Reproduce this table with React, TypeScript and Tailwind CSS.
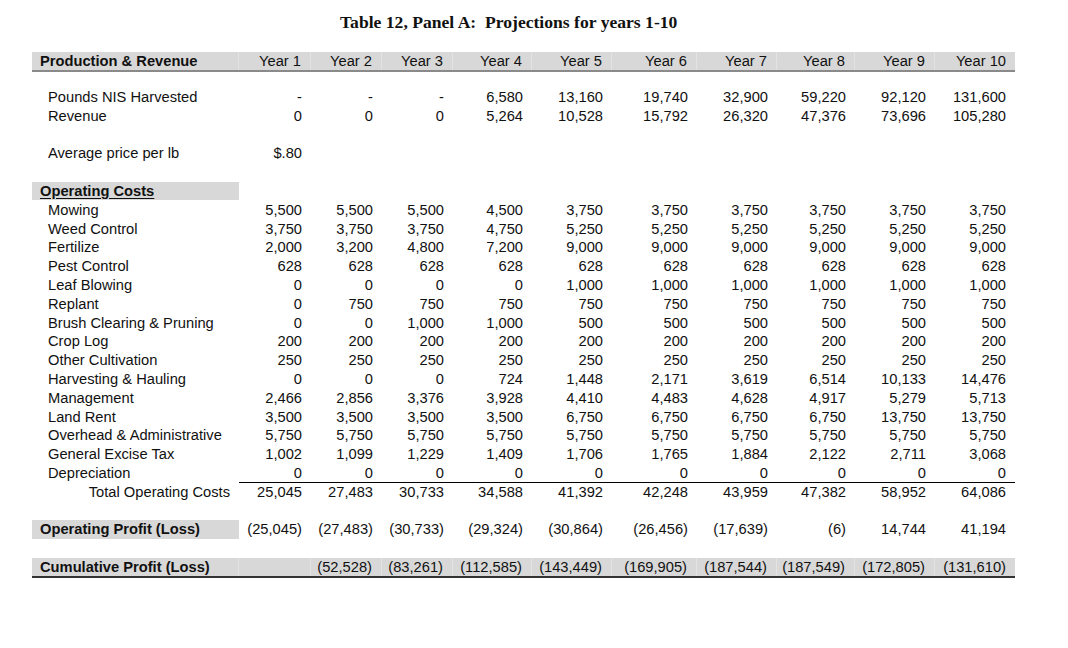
import React from 'react';

const COLS = 'grid grid-cols-[207px_72px_71px_71px_79px_80px_85px_80px_78px_80px_80px]';
const YEARS = ['Year 1', 'Year 2', 'Year 3', 'Year 4', 'Year 5', 'Year 6', 'Year 7', 'Year 8', 'Year 9', 'Year 10'];

type Row = { label: string; values: string[] };

const production: Row[] = [
  { label: 'Pounds NIS Harvested', values: ['-', '-', '-', '6,580', '13,160', '19,740', '32,900', '59,220', '92,120', '131,600'] },
  { label: 'Revenue', values: ['0', '0', '0', '5,264', '10,528', '15,792', '26,320', '47,376', '73,696', '105,280'] },
];

const costs: Row[] = [
  { label: 'Mowing', values: ['5,500', '5,500', '5,500', '4,500', '3,750', '3,750', '3,750', '3,750', '3,750', '3,750'] },
  { label: 'Weed Control', values: ['3,750', '3,750', '3,750', '4,750', '5,250', '5,250', '5,250', '5,250', '5,250', '5,250'] },
  { label: 'Fertilize', values: ['2,000', '3,200', '4,800', '7,200', '9,000', '9,000', '9,000', '9,000', '9,000', '9,000'] },
  { label: 'Pest Control', values: ['628', '628', '628', '628', '628', '628', '628', '628', '628', '628'] },
  { label: 'Leaf Blowing', values: ['0', '0', '0', '0', '1,000', '1,000', '1,000', '1,000', '1,000', '1,000'] },
  { label: 'Replant', values: ['0', '750', '750', '750', '750', '750', '750', '750', '750', '750'] },
  { label: 'Brush Clearing & Pruning', values: ['0', '0', '1,000', '1,000', '500', '500', '500', '500', '500', '500'] },
  { label: 'Crop Log', values: ['200', '200', '200', '200', '200', '200', '200', '200', '200', '200'] },
  { label: 'Other Cultivation', values: ['250', '250', '250', '250', '250', '250', '250', '250', '250', '250'] },
  { label: 'Harvesting & Hauling', values: ['0', '0', '0', '724', '1,448', '2,171', '3,619', '6,514', '10,133', '14,476'] },
  { label: 'Management', values: ['2,466', '2,856', '3,376', '3,928', '4,410', '4,483', '4,628', '4,917', '5,279', '5,713'] },
  { label: 'Land Rent', values: ['3,500', '3,500', '3,500', '3,500', '6,750', '6,750', '6,750', '6,750', '13,750', '13,750'] },
  { label: 'Overhead & Administrative', values: ['5,750', '5,750', '5,750', '5,750', '5,750', '5,750', '5,750', '5,750', '5,750', '5,750'] },
  { label: 'General Excise Tax', values: ['1,002', '1,099', '1,229', '1,409', '1,706', '1,765', '1,884', '2,122', '2,711', '3,068'] },
  { label: 'Depreciation', values: ['0', '0', '0', '0', '0', '0', '0', '0', '0', '0'] },
];

const totals = ['25,045', '27,483', '30,733', '34,588', '41,392', '42,248', '43,959', '47,382', '58,952', '64,086'];
const profit = ['(25,045)', '(27,483)', '(30,733)', '(29,324)', '(30,864)', '(26,456)', '(17,639)', '(6)', '14,744', '41,194'];
const cumulative = ['', '(52,528)', '(83,261)', '(112,585)', '(143,449)', '(169,905)', '(187,544)', '(187,549)', '(172,805)', '(131,610)'];

function DataRow({ row }: { row: Row }) {
  return (
    <div className={`${COLS} h-[18.8px] items-center`}>
      <div className="pl-4 whitespace-nowrap">{row.label}</div>
      {row.values.map((v, i) => (
        <div key={i} className="pr-[9px] text-right whitespace-nowrap">{v}</div>
      ))}
    </div>
  );
}

function Spacer() {
  return <div className="h-[18.8px]" />;
}

export default function App() {
  return (
    <div className="min-h-screen bg-white text-[#111] font-['Liberation_Sans',Arial,sans-serif] text-[14.7px] leading-[18px]">
      {/* Title */}
      <div className="pt-[12px] pl-[340px] h-[51px] font-['Liberation_Serif','Times_New_Roman',serif] font-bold text-[17.6px] leading-[20px] whitespace-pre">
        Table 12, Panel A:  Projections for years 1-10
      </div>

      <div className="ml-8 w-[983px]">
        {/* Header band */}
        <div className={`${COLS} mt-px h-[20px] items-center bg-[#d8d8d8] border-b-2 border-[#8a8a8a]`}>
          <div className="pl-2 font-bold h-full flex items-center border-r border-[#e3e3e3]">Production &amp; Revenue</div>
          {YEARS.map((y, i) => (
            <div key={y} className={`pr-[9px] text-right h-full flex items-center justify-end ${i < 9 ? 'border-r border-[#e3e3e3]' : ''}`}>
              {y}
            </div>
          ))}
        </div>

        <div className="h-[15.6px]" />
        {production.map((r) => (
          <DataRow key={r.label} row={r} />
        ))}
        <Spacer />
        <div className={`${COLS} h-[18.8px] items-center`}>
          <div className="pl-4">Average price per lb</div>
          <div className="pr-[9px] text-right">$.80</div>
        </div>
        <Spacer />

        {/* Operating costs */}
        <div className={`${COLS} h-[18.8px] items-center`}>
          <div className="pl-2 font-bold underline underline-offset-2 bg-[#d8d8d8] h-full flex items-center">Operating Costs</div>
        </div>
        {costs.map((r) => (
          <DataRow key={r.label} row={r} />
        ))}
        <div className={`${COLS} h-[18.8px] items-center`}>
          <div className="pr-[9px] text-right whitespace-nowrap">Total Operating Costs</div>
          {totals.map((v, i) => (
            <div key={i} className="pr-[9px] text-right h-full flex items-center justify-end border-t border-black">{v}</div>
          ))}
        </div>
        <Spacer />

        {/* Operating profit */}
        <div className={`${COLS} h-[18.8px] items-center`}>
          <div className="pl-2 font-bold bg-[#d8d8d8] h-full flex items-center">Operating Profit (Loss)</div>
          {profit.map((v, i) => (
            <div key={i} className="pr-[9px] text-right whitespace-nowrap">{v}</div>
          ))}
        </div>
        <Spacer />

        {/* Cumulative */}
        <div className={`${COLS} h-[20px] items-center bg-[#d8d8d8] border-b-2 border-[#333]`}>
          <div className="pl-2 font-bold h-full flex items-center border-r border-[#e3e3e3]">Cumulative Profit (Loss)</div>
          {cumulative.map((v, i) => (
            <div key={i} className={`pr-[9px] h-full flex items-center justify-end whitespace-nowrap ${i < 9 ? 'border-r border-[#e3e3e3]' : ''}`}>
              {v}
            </div>
          ))}
        </div>
      </div>
    </div>
  );
}
